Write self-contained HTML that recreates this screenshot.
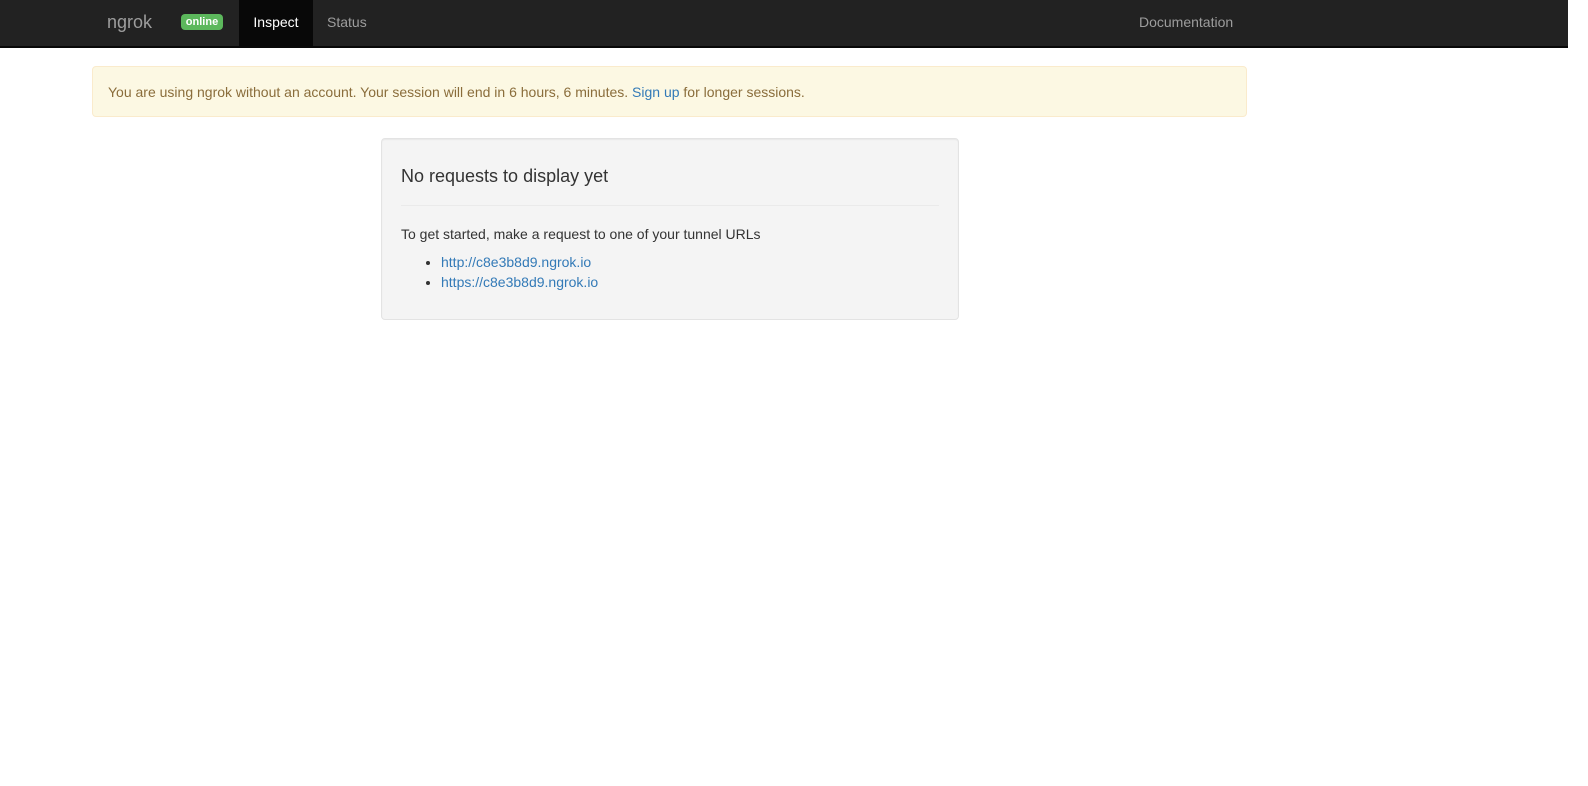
<!DOCTYPE html>
<html><head><meta charset="utf-8"><style>
*{box-sizing:border-box}
body{margin:0;font-family:"Liberation Sans",Arial,sans-serif;font-size:14px;color:#333;background:#fff;width:1588px;height:786px;overflow:hidden}
.nav{position:absolute;left:0;top:0;width:1568px;height:48px;background:#222;border-bottom:2px solid #080808}
.nav a{position:absolute;text-decoration:none}
.brand{left:107px;top:12px;font-size:18px;color:#9d9d9d}
.badge{position:absolute;left:181px;top:14px;width:42px;height:16px;background:#5cb85c;border-radius:4px;color:#fff;font-weight:bold;font-size:11px;text-align:center;line-height:16px}
.active{left:239px;top:0;width:74px;height:46px;background:#080808;color:#fff!important;line-height:44px;text-align:center}
.status{left:327px;top:0;line-height:44px;color:#9d9d9d}
.doc{left:1139px;top:0;line-height:44px;color:#9d9d9d}
.alert{position:absolute;left:92px;top:66px;width:1155px;height:51px;background:#fcf8e3;border:1px solid #faebcc;border-radius:4px;color:#8a6d3b;padding:0 15px;line-height:50px}
.alert a{color:#337ab7;text-decoration:none}
.well{position:absolute;left:381px;top:138px;width:578px;height:182px;background:#f4f4f4;border:1px solid #e3e3e3;border-radius:4px;box-shadow:inset 0 1px 1px rgba(0,0,0,.05)}
h4{position:absolute;left:19px;top:27px;margin:0;font-size:18px;font-weight:normal;color:#333}
hr{position:absolute;left:19px;top:66px;width:538px;margin:0;border:0;border-top:1px solid #eaeaea}
.p{position:absolute;left:19px;top:87px}
ul{position:absolute;left:19px;top:113px;margin:0;padding-left:40px;line-height:20px}
ul a{color:#337ab7;text-decoration:none}
</style></head><body>
<div class="nav">
<a class="brand" href="#">ngrok</a>
<span class="badge">online</span>
<a class="active" href="#">Inspect</a>
<a class="status" href="#">Status</a>
<a class="doc" href="#">Documentation</a>
</div>
<div class="alert">You are using ngrok without an account. Your session will end in 6 hours, 6 minutes. <a href="#">Sign up</a> for longer sessions.</div>
<div class="well">
<h4>No requests to display yet</h4>
<hr>
<div class="p">To get started, make a request to one of your tunnel URLs</div>
<ul><li><a href="#">http://c8e3b8d9.ngrok.io</a></li><li><a href="#">https://c8e3b8d9.ngrok.io</a></li></ul>
</div>
</body></html>
